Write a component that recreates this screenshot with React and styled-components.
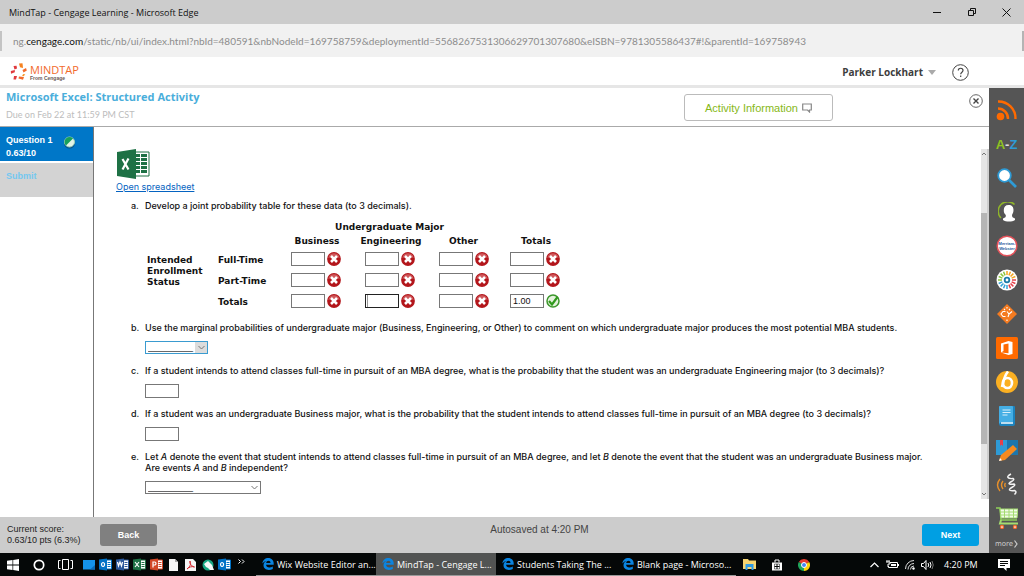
import styled, { createGlobalStyle } from "styled-components";

const GlobalStyle = createGlobalStyle`
  :root {
    --font-ui: "Open Sans", "Noto Sans", sans-serif;
    --font-address: Lato, "Open Sans", sans-serif;
    --font-arial: "Liberation Sans", Arial, sans-serif;
    --font-content: Inter, Verdana, sans-serif;
    --font-heading: "DejaVu Sans", Verdana, sans-serif;
    --gray-bar: #cccccc;
    --gray-rail: #555555;
    --blue-500: #009fe3;
    --blue-700: #0077c8;
  }

  * {
    box-sizing: border-box;
    margin: 0;
    padding: 0;
  }

  body {
    background: #fff;
    font-family: var(--font-ui);
  }

  button {
    border: none;
    background: none;
    font-family: inherit;
    cursor: pointer;
  }

  svg {
    display: block;
    flex-shrink: 0;
  }
`;

const Page = styled.div`
  display: flex;
  flex-direction: column;
  min-height: 100vh;
`;

/* Window chrome */

const TitleBar = styled.div`
  display: flex;
  justify-content: space-between;
  align-items: center;
  height: 24px;
  padding-left: 9px;
  background: var(--gray-bar);
  font-size: 9px;
  color: #111;
`;

const WindowButtons = styled.div`
  display: flex;
`;

const WindowButton = styled.button`
  display: flex;
  align-items: center;
  justify-content: center;
  width: 35px;
  height: 24px;
`;

const AddressBar = styled.div`
  display: flex;
  align-items: center;
  height: 33px;
  background: #f1f1f1;
`;

const Address = styled.p`
  flex: 1;
  height: 20px;
  padding-left: 11px;
  border-left: 2px solid #c4c4c4;
  border-right: 2px solid #b4b4b4;
  font-family: var(--font-address);
  font-size: 10px;
  line-height: 20px;
  color: #8c8c8c;
  white-space: nowrap;

  span {
    color: #111;
  }
`;

/* Site header */

const Header = styled.header`
  display: flex;
  justify-content: space-between;
  align-items: center;
  height: 31px;
  padding: 2px 55px 0 10px;
  border-bottom: 3px solid #e6e6e6;
  background: #fff;
`;

const Logo = styled.a`
  display: flex;
  align-items: center;
  gap: 3px;
  text-decoration: none;
`;

const LogoText = styled.span`
  display: flex;
  flex-direction: column;
  font-size: 11px;
  line-height: 11px;
  color: #f26a2b;

  small {
    font-family: var(--font-arial);
    font-size: 5px;
    font-weight: 700;
    line-height: 6px;
    color: #6b5a55;
  }
`;

const Account = styled.div`
  display: flex;
  align-items: center;
  gap: 16px;
`;

const UserButton = styled.button`
  display: flex;
  align-items: center;
  gap: 5px;
  font-size: 10px;
  font-weight: 700;
  color: #3d3d3d;
`;

/* Body */

const Body = styled.div`
  display: flex;
  flex: 1;
`;

const Main = styled.main`
  display: flex;
  flex: 1;
  flex-direction: column;
  min-width: 0;
`;

const ActivityHeader = styled.div`
  display: flex;
  justify-content: space-between;
  height: 39px;
  padding: 0 6px;
  border-bottom: 1px solid #aaa;
`;

const ActivityTitle = styled.div`
  h1 {
    font-size: 11px;
    line-height: 18px;
    color: #4aaedb;
  }

  p {
    font-family: var(--font-address);
    font-size: 9px;
    line-height: 17px;
    color: #bdbdbd;
  }
`;

const ActivityActions = styled.div`
  display: flex;
  align-items: flex-start;
  gap: 136px;
  padding-top: 6px;
`;

const InfoButton = styled.button`
  display: flex;
  align-items: center;
  justify-content: center;
  gap: 4px;
  width: 149px;
  height: 27px;
  border: 1px solid #bbb;
  border-radius: 3px;
  font-family: var(--font-arial);
  font-size: 11px;
  color: #86b817;
`;

const Workspace = styled.div`
  display: flex;
  flex: 1;
`;

const Sidebar = styled.nav`
  display: flex;
  flex-direction: column;
  gap: 2px;
  width: 94px;
  border-right: 1px solid #777;
`;

const NavItem = styled.a`
  display: flex;
  justify-content: space-between;
  height: 34px;
  padding: 7px 17px 0 6px;
  background: ${(props) => (props.$active ? "var(--blue-700)" : "#d3d3d3")};
  font-family: var(--font-arial);
  font-size: 9px;
  font-weight: 700;
  line-height: 13px;
  color: ${(props) => (props.$active ? "#fff" : "#74c8f0")};
  text-decoration: none;
`;

const Content = styled.section`
  flex: 1;
  padding: 22px 20px 22px 22px;
  font-family: var(--font-content);
  font-size: 9px;
  font-weight: 500;
  line-height: 11px;
  color: #111;
`;

const SpreadsheetLink = styled.a`
  display: inline-flex;
  flex-direction: column;
  gap: 2px;
  font-weight: 400;
  color: #0563c1;
`;

const Questions = styled.ol`
  display: flex;
  flex-direction: column;
  gap: 10px;
  padding: 8px 0 0 15px;
  list-style: none;
`;

const Question = styled.li`
  display: grid;
  grid-template-columns: 14px 1fr;
`;

const Answer = styled.div`
  display: flex;
  height: 14px;
  margin-top: 8px;
`;

const Field = styled.input`
  width: 34px;
  height: 14px;
  padding: 0 2px;
  border: 1px solid ${(props) => (props.$editing ? "#222" : "#777")};
  border-radius: 0;
  background: ${(props) =>
    props.$editing
      ? "linear-gradient(90deg, #fff 1px, #999 1px, #999 2px, #fff 2px)"
      : "#fff"};
  font-family: var(--font-arial);
  font-size: 9px;
  color: #111;
`;

const SelectBox = styled.div`
  position: relative;
  width: ${(props) => props.$width};
  height: 13px;

  select {
    width: 100%;
    height: 13px;
    padding: 0 2px;
    border: 1px solid ${(props) => (props.$focused ? "#3a9bd0" : "#777")};
    border-radius: 0;
    appearance: none;
    background: #fff;
    font-family: var(--font-arial);
    font-size: 9px;
    line-height: 11px;
    color: #111;
  }
`;

const SelectArrow = styled.span`
  position: absolute;
  top: 1px;
  right: 1px;
  display: flex;
  align-items: center;
  justify-content: center;
  width: 12px;
  height: 11px;
  background: ${(props) => (props.$focused ? "#dcdcdc" : "#fff")};
  pointer-events: none;
`;

const Table = styled.table`
  width: 415px;
  margin: 9px 0 1px 2px;
  border-collapse: collapse;
  table-layout: fixed;
  font-family: var(--font-heading);

  tr {
    height: 14px;
  }

  tbody tr {
    height: 21px;
  }

  th {
    font-weight: 700;
    text-align: left;
  }
`;

const Col = styled.col`
  width: ${(props) => props.$width};
`;

const ColumnHead = styled.th`
  && {
    padding-right: ${(props) => (props.$last ? "0" : "22px")};
    text-align: center;
    white-space: nowrap;
  }

  span {
    display: flex;
    justify-content: center;
  }
`;

const GroupHead = styled.th`
  padding-top: 7px;
  vertical-align: top;
`;

const RowHead = styled.th`
  padding-top: 3px;
`;

const GradedField = styled.div`
  display: flex;
  align-items: center;
  gap: 2px;
`;

const Scroller = styled.div`
  display: flex;
  flex-direction: column;
  align-items: center;
  width: 8px;
  margin: 22px 0 18px;
  padding: 3px 0;
  border-right: 2px solid #cfcfcf;
  background: #e5e5e5;
`;

const Thumb = styled.div`
  align-self: stretch;
  flex: 1;
  margin: 57px 0 48px;
  background: #b5b5b5;
`;

const Footer = styled.footer`
  display: flex;
  align-items: flex-start;
  height: 36px;
  padding: 7px 10px 0 7px;
  background: var(--gray-bar);
  font-family: var(--font-arial);
  font-size: 9px;
  line-height: 11px;
  color: #222;
`;

const Score = styled.p`
  width: 93px;
`;

const Autosave = styled.p`
  flex: 1;
  font-size: 10px;
  text-align: center;
  color: #444;
`;

const FooterButton = styled.button`
  width: 57px;
  height: 22px;
  border-radius: 3px;
  background: ${(props) => (props.$primary ? "var(--blue-500)" : "#808080")};
  font-family: var(--font-arial);
  font-size: 9px;
  font-weight: 700;
  color: #fff;
`;

/* App rail */

const Rail = styled.aside`
  display: flex;
  flex-direction: column;
  align-items: center;
  width: 35px;
  padding-top: 5px;
  background: var(--gray-rail);
`;

const RailButton = styled.button`
  display: flex;
  align-items: center;
  justify-content: center;
  width: 35px;
  height: 34px;
`;

const AzLabel = styled.span`
  font-family: var(--font-arial);
  font-size: 13px;
  font-weight: 700;
  color: ${(props) => props.$color};
`;

const MoreButton = styled.button`
  display: flex;
  align-items: center;
  gap: 1px;
  height: 18px;
  font-family: var(--font-heading);
  font-size: 7px;
  color: #ccc;
`;

/* Taskbar */

const Taskbar = styled.div`
  display: flex;
  height: 23px;
  background: #050808;
  color: #fff;
`;

const StartGroup = styled.div`
  display: flex;
  width: 78px;
`;

const PinnedGroup = styled.div`
  display: flex;
  width: 178px;
  padding-left: 2px;
`;

const TaskIcon = styled.button`
  display: flex;
  align-items: center;
  justify-content: center;
  width: ${(props) => props.$width || "17px"};
  height: 23px;
  color: #fff;
`;

const TaskTab = styled.button`
  display: flex;
  align-items: center;
  gap: 3px;
  width: 120px;
  padding-left: 6px;
  border-bottom: 1px solid #999;
  background: ${(props) => (props.$active ? "#525453" : "transparent")};
  font-size: 9px;
  color: #fff;
  white-space: nowrap;
`;

const AppGroup = styled.div`
  display: flex;
  flex: 1;
`;

const Tray = styled.div`
  display: flex;
  align-items: center;
`;

const Clock = styled.time`
  width: 48px;
  padding-left: 8px;
  font-size: 9px;
  white-space: nowrap;
`;

function LogoMark() {
  return (
    <svg width="17" height="18" viewBox="0 0 17 18">
      <g fill="#f58220">
        <path d="M9 .5l3.500-.3.500 4.800-3-.8z" />
        <path d="M12.500 7l3.500-2 .8 2.500-3.300 2z" fill="#f26a2b" />
        <path d="M13.500 11l1.800.6-1.800 1.600-1.500-.8z" fill="#f7941e" />
        <path d="M9 13.500l5 .5-1 2.800-4.500-1.300z" fill="#f26a2b" />
      </g>
      <g fill="#e03a3e">
        <path d="M3.500 3l3-.3L7 5.500l-2.500 1z" />
        <path d="M.8 8l4-1v2.200L1 10.800z" />
        <path d="M4 13h3l-1 3.500H3.500z" />
      </g>
    </svg>
  );
}

function ExcelIcon() {
  return (
    <svg width="34" height="30" viewBox="0 0 34 30">
      <path d="M18 3h15v24H18z" fill="#fff" stroke="#1e7145" />
      <g fill="#1e7145">
        <path d="M1 3L20 0v30L1 27z" />
        {[5, 9, 13, 17, 21].map((y) => (
          <path key={y} d={`M20 ${y}h4v3h-4zM25 ${y}h6v3h-6z`} />
        ))}
      </g>
      <path
        d="M6.500 10l6 10.500M12.500 9.500L6.500 20.500"
        stroke="#fff"
        strokeWidth="2.200"
      />
    </svg>
  );
}

function WrongIcon() {
  return (
    <svg width="14" height="14" viewBox="0 0 14 14">
      <circle cx="7" cy="7" r="6.900" fill="#b3161b" />
      <path d="M1.300 6a5.800 5.800 0 0 1 11.400 0q-5.700-2.500-11.400 0" fill="#d0595c" />
      <path d="M4 4l6 6M10 4l-6 6" stroke="#fff" strokeWidth="2.600" />
    </svg>
  );
}

function RightIcon() {
  return (
    <svg width="14" height="14" viewBox="0 0 14 14">
      <circle cx="7" cy="7" r="6" fill="#e4f2dc" stroke="#3c962c" strokeWidth="1.500" />
      <path d="M3 7l3 3.500L11.500 3" fill="none" stroke="#2f9a1c" strokeWidth="2.200" />
    </svg>
  );
}

function PartialIcon() {
  return (
    <svg width="13" height="15" viewBox="0 0 13 15">
      <circle cx="6.500" cy="9" r="5.600" fill="#04508b" />
      <circle cx="6.500" cy="8" r="5" fill="#e2f3e6" stroke="#9fd3bd" />
      <path d="M3 11.500A4.900 4.900 0 0 1 10 4.500z" fill="#17a05c" />
    </svg>
  );
}

function Chevron() {
  return (
    <svg width="7" height="5" viewBox="0 0 7 5">
      <path d="M.5 1l3 3 3-3" fill="none" stroke="#777" />
    </svg>
  );
}

function EdgeIcon() {
  return (
    <svg width="12" height="12" viewBox="0 0 12 12">
      <path
        d="M.3 5.500C.8 2 3.200 0 6.200 0c3.500 0 5.600 2.500 5.500 5.800v1H4.100c.1 1.800 1.400 2.600 3.200 2.600 1.300 0 2.500-.3 3.500-.9v2.500c-1.100.6-2.500 1-4 1C3.600 12 1.500 10 1.500 7.300c0-2 1-3.500 2.800-4.400C2.700 3.200 1.200 4.200.3 5.500zM4.200 4.900H8.500C8.500 3.500 7.700 2.700 6.500 2.700S4.400 3.600 4.200 4.900z"
        fill="#0a84e0"
      />
    </svg>
  );
}

const officeMarks = {
  o: "M4 4.500a1.500 2 0 1 0 .1 0z",
  w: "M1.500 4l1 4 1.500-4 1.500 4 1-4",
  x: "M2 4l4 5M6 4L2 9",
  p: "M3 9.500V4h1.500a1.500 1.500 0 0 1 0 3H3",
};

function OfficeIcon({ mark, color }) {
  return (
    <svg width="13" height="13" viewBox="0 0 13 13">
      <path d="M7 2h5.500v9H7z" fill="#fff" stroke={color} />
      <path d="M8.500 4.500h3M8.500 6.500h3M8.500 8.500h3" stroke={color} />
      <path d="M0 1.500L8 .5v12l-8-1z" fill={color} />
      <path d={officeMarks[mark]} fill="none" stroke="#fff" strokeWidth="1.200" />
    </svg>
  );
}

const railIcons = [
  {
    label: "RSS",
    icon: (
      <svg width="22" height="22" viewBox="0 0 22 22">
        <circle cx="4.500" cy="17.500" r="3.800" fill="#ff6a00" />
        <path
          d="M2 9.500a10 10 0 0 1 10 10.500M2 2.500a17 17 0 0 1 17.500 17.500"
          fill="none"
          stroke="#ff6a00"
          strokeWidth="2.400"
        />
      </svg>
    ),
  },
  {
    label: "Dictionary",
    icon: (
      <>
        <AzLabel $color="#8fc31f">A</AzLabel>
        <AzLabel $color="#ddd">-</AzLabel>
        <AzLabel $color="#2e9bd6">Z</AzLabel>
      </>
    ),
  },
  {
    label: "Search",
    icon: (
      <svg width="20" height="20" viewBox="0 0 20 20">
        <path d="M11 11l8 8" stroke="#2e9bd6" strokeWidth="2.600" />
        <circle cx="7.500" cy="7.500" r="6.300" fill="#fff" stroke="#2e9bd6" strokeWidth="1.800" />
      </svg>
    ),
  },
  {
    label: "Profile",
    icon: (
      <svg width="18" height="20" viewBox="0 0 18 20">
        <path d="M3 16A9 9 0 0 1 16.500 2.500" fill="none" stroke="#8fb52a" strokeWidth="1.500" />
        <path
          d="M10.500 3c3.500 0 5 2 5 5s-1 3.500-1.500 5c0 2 .5 2.500 3 3.500v1.500c-3 2-9 2-12 0v-1.500c2.500-1 3-1.500 2.800-3.500C6 11.500 5.800 10 5.800 8c0-3 1.500-5 4.700-5z"
          fill="#fff"
        />
      </svg>
    ),
  },
  {
    label: "Merriam-Webster",
    icon: (
      <svg width="22" height="22" viewBox="0 0 22 22">
        <circle cx="11" cy="11" r="9.800" fill="#fff" stroke="#e4525a" strokeWidth="1.500" />
        <g
          fill="#27609e"
          fontFamily="Liberation Sans"
          fontWeight="700"
          fontSize="4"
          textAnchor="middle"
        >
          <text x="11" y="10">Merriam-</text>
          <text x="11" y="15">Webster</text>
        </g>
      </svg>
    ),
  },
  {
    label: "Insights",
    icon: (
      <svg width="22" height="22" viewBox="0 0 22 22">
        <circle cx="11" cy="11" r="10.500" fill="#fff" />
        {Array.from({ length: 16 }, (_, i) => (
          <path
            key={i}
            d="M11 2v4"
            stroke={["#f5a623", "#e5404a", "#35a3d8", "#8cc63f"][i >> 2]}
            strokeWidth="1.500"
            transform={`rotate(${i * 22.5} 11 11)`}
          />
        ))}
        <circle cx="11" cy="11" r="2.300" fill="#fff" stroke="#1b7ba8" strokeWidth="1.800" />
      </svg>
    ),
  },
  {
    label: "CourseYard",
    icon: (
      <svg width="20" height="20" viewBox="0 0 20 20">
        <path d="M10 0l10 10-10 10L0 10z" fill="#f47b20" />
        <path
          d="M8.500 7.500H6L4 10l2 2.500h2.500M10 7.500l2 2.500M15 7.500l-3 2.500-1 3M10 3v1.500M10 15.500V17M7 5l1 1M13 5l-1 1"
          fill="none"
          stroke="#fff"
          strokeWidth="1.100"
        />
      </svg>
    ),
  },
  {
    label: "Office",
    icon: (
      <svg width="22" height="22" viewBox="0 0 22 22">
        <rect width="22" height="22" rx="1.500" fill="#ff6a00" />
        <path d="M5 6.500L12.500 4l4 1v12l-4 1L5 15.500l7.500.8V6.500L7.500 7.600v6.500L5 15.500z" fill="#fff" />
      </svg>
    ),
  },
  {
    label: "Bongo",
    icon: (
      <svg width="22" height="22" viewBox="0 0 22 22">
        <circle cx="11" cy="11" r="11" fill="#fbb022" />
        <path d="M12 .5C9 4 7.500 9 6 16" fill="none" stroke="#fff" strokeWidth="2.600" />
        <ellipse cx="11.500" cy="12" rx="4.500" ry="5" fill="none" stroke="#fff" strokeWidth="2.600" />
      </svg>
    ),
  },
  {
    label: "eBook",
    icon: (
      <svg width="18" height="20" viewBox="0 0 18 20">
        <path d="M2 0h14q1 0 1 1v17q0 2-2 2H3q-2 0-2-2V1q0-1 1-1z" fill="#1d83bd" />
        <path d="M2 0h12q1 0 1 1v15H3l-2 2V1q0-1 1-1z" fill="#45aee4" />
        <path d="M3 17h12" stroke="#e8f4fa" strokeWidth="1.600" />
        <path d="M4.500 4h8M4.500 6.500h8M4.500 9h5" stroke="#d9effa" />
      </svg>
    ),
  },
  {
    label: "Notes",
    icon: (
      <svg width="22" height="22" viewBox="0 0 22 22">
        <path d="M0 1h11v16l-5-1H0z" fill="#2e9bd6" />
        <path d="M11 1h11v15H11z" fill="#1b76ad" />
        <path d="M4 1h3v6L5.500 5.500 4 7z" fill="#e5404a" />
        <path d="M17 6l4 4L9 21l-6 1 2-6z" fill="#f58a1f" />
        <path d="M3 22l1-3 2 2.300z" fill="#fff" />
      </svg>
    ),
  },
  {
    label: "ReadSpeaker",
    icon: (
      <svg width="22" height="22" viewBox="0 0 22 22">
        <path
          d="M4 6q-5 6 0 12M7 8q-3 4 0 8M9.500 10q-1.500 2 0 4"
          fill="none"
          stroke="#e8902a"
          strokeWidth="1.400"
        />
        <path
          d="M15 1q-4 2-3 3.500t5 1q2 1-1.500 3t-2 2.500 4.500 0q2 1-1.500 3t-3 3 5 .5q3 1 0 4"
          fill="none"
          stroke="#f2f2f2"
          strokeWidth="1.500"
        />
      </svg>
    ),
  },
  {
    label: "Store",
    icon: (
      <svg width="22" height="22" viewBox="0 0 22 22">
        <path d="M0 1h4l1 12h16" fill="none" stroke="#8fd05a" strokeWidth="1.500" />
        <path d="M4 2h18l-1 9H5z" fill="#f3fbe9" stroke="#a4dc70" />
        <path d="M8.500 2v9M13 2v9M17.500 2v9M4 5h18M5 8h16" stroke="#a4dc70" />
        <path d="M5 13l-1 3.500h18" fill="none" stroke="#a4dc70" strokeWidth="2" />
        <circle cx="6" cy="20" r="1.500" fill="#fff" stroke="#f26a2b" strokeWidth="1.300" />
        <circle cx="19" cy="20" r="1.500" fill="#fff" stroke="#f26a2b" strokeWidth="1.300" />
      </svg>
    ),
  },
];

const pinned = [
  {
    label: "Desktop",
    icon: (
      <svg width="12" height="10" viewBox="0 0 12 10">
        <path d="M0 0h12v9.500H0z" fill="#1593ea" />
        <path d="M12 5v4.500H7z" fill="#0a6bb8" />
      </svg>
    ),
  },
  { label: "Outlook", icon: <OfficeIcon mark="o" color="#0072c6" /> },
  { label: "Word", icon: <OfficeIcon mark="w" color="#2b579a" /> },
  { label: "Excel", icon: <OfficeIcon mark="x" color="#1e7145" /> },
  { label: "PowerPoint", icon: <OfficeIcon mark="p" color="#d24726" /> },
  {
    label: "Document",
    icon: (
      <svg width="9" height="12" viewBox="0 0 9 12">
        <path d="M0 0h6l3 3v9H0z" fill="#f6f6f6" />
        <path d="M6 0v3h3z" fill="#aaa" />
      </svg>
    ),
  },
  {
    label: "Acrobat",
    icon: (
      <svg width="11" height="12" viewBox="0 0 11 12">
        <path d="M0 0h8l3 3v9H0z" fill="#f6f6f6" />
        <path d="M2 10C6 7 6 4 5 2c-1 2 1 5 4.500 6C7 7 4 8 2 10z" fill="none" stroke="#d2232a" />
      </svg>
    ),
  },
  {
    label: "Paint",
    icon: (
      <svg width="12" height="12" viewBox="0 0 12 12">
        <circle cx="6" cy="6" r="5.500" fill="#19a884" />
        <path d="M2 5l4-3 4 4 2 5H8L6 9 4 8z" fill="#f4f9f7" />
      </svg>
    ),
  },
  { label: "Outlook mail", icon: <OfficeIcon mark="o" color="#0072c6" /> },
];

const tabs = [
  "Wix Website Editor an...",
  "MindTap - Cengage L...",
  "Students Taking The ...",
  "Blank page - Microso...",
];

const columns = ["Business", "Engineering", "Other", "Totals"];
const columnWidths = ["71px", "73px", "74px", "74px", "71px", "52px"];

const rows = [
  { label: "Full-Time", values: ["", "", "", ""] },
  { label: "Part-Time", values: ["", "", "", ""] },
  { label: "Totals", values: ["", "", "", "1.00"] },
];

function ProbabilityTable() {
  return (
    <Table>
      <colgroup>
        {columnWidths.map((width, i) => (
          <Col key={i} $width={width} />
        ))}
      </colgroup>
      <thead>
        <tr>
          <td colSpan={2} />
          <ColumnHead colSpan={3}>Undergraduate Major</ColumnHead>
          <td />
        </tr>
        <tr>
          <td colSpan={2} />
          {columns.map((column, i) => (
            <ColumnHead key={column} $last={i === 3}>
              <span>{column}</span>
            </ColumnHead>
          ))}
        </tr>
      </thead>
      <tbody>
        {rows.map((row, r) => (
          <tr key={row.label}>
            {r === 0 && (
              <GroupHead rowSpan={3}>
                Intended
                <br />
                Enrollment
                <br />
                Status
              </GroupHead>
            )}
            <RowHead>{row.label}</RowHead>
            {row.values.map((value, c) => (
              <td key={c}>
                <GradedField>
                  <Field
                    aria-label={`${row.label}, ${columns[c]}`}
                    defaultValue={value}
                    $editing={r === 2 && c === 1}
                  />
                  {value ? <RightIcon /> : <WrongIcon />}
                </GradedField>
              </td>
            ))}
          </tr>
        ))}
      </tbody>
    </Table>
  );
}

function Dropdown({ id, width, focused }) {
  return (
    <SelectBox $width={width} $focused={focused}>
      <select id={id}>
        <option>_________</option>
      </select>
      <SelectArrow $focused={focused}>
        <Chevron />
      </SelectArrow>
    </SelectBox>
  );
}

function App() {
  return (
    <>
      <GlobalStyle />
      <Page>
        <TitleBar>
          <span>MindTap - Cengage Learning - Microsoft Edge</span>
          <WindowButtons>
            <WindowButton aria-label="Minimize">
              <svg width="8" height="9" viewBox="0 0 8 9">
                <path d="M0 4.500h8" stroke="#111" />
              </svg>
            </WindowButton>
            <WindowButton aria-label="Restore">
              <svg width="8" height="8" viewBox="0 0 8 8">
                <path d="M.5 2.500h5v5h-5zM2.500 2V.5h5v5H6" fill="none" stroke="#111" />
              </svg>
            </WindowButton>
            <WindowButton aria-label="Close">
              <svg width="9" height="9" viewBox="0 0 9 9">
                <path d="M.5.5l8 8M8.500.5l-8 8" stroke="#111" />
              </svg>
            </WindowButton>
          </WindowButtons>
        </TitleBar>

        <AddressBar>
          <Address>
            ng.<span>cengage.com</span>
            /static/nb/ui/index.html?nbId=480591&amp;nbNodeId=169758759&amp;deploymentId=5568267531306629701307680&amp;eISBN=9781305586437#!&amp;parentId=169758943
          </Address>
        </AddressBar>

        <Header>
          <Logo href="#home">
            <LogoMark />
            <LogoText>
              MINDTAP
              <small>From Cengage</small>
            </LogoText>
          </Logo>
          <Account>
            <UserButton>
              Parker Lockhart
              <svg width="8" height="5" viewBox="0 0 8 5">
                <path d="M0 0h8L4 5z" fill="#aaa" />
              </svg>
            </UserButton>
            <button aria-label="Help">
              <svg width="17" height="17" viewBox="0 0 17 17">
                <circle cx="8.500" cy="8.500" r="7.800" fill="none" stroke="#444" />
                <path
                  d="M6.300 6.500c0-3 4.700-3 4.700 0 0 1.700-2.300 1.700-2.300 3.800M8.700 11.500v1.500"
                  fill="none"
                  stroke="#444"
                  strokeWidth="1.200"
                />
              </svg>
            </button>
          </Account>
        </Header>

        <Body>
          <Main>
            <ActivityHeader>
              <ActivityTitle>
                <h1>Microsoft Excel: Structured Activity</h1>
                <p>Due on Feb 22 at 11:59 PM CST</p>
              </ActivityTitle>
              <ActivityActions>
                <InfoButton>
                  Activity Information
                  <svg width="10" height="10" viewBox="0 0 10 10">
                    <path
                      d="M.7 1h8.600v6H7.500v2L5.500 7H.7z"
                      fill="none"
                      stroke="#888"
                      strokeWidth="1.200"
                    />
                  </svg>
                </InfoButton>
                <button aria-label="Close activity">
                  <svg width="14" height="14" viewBox="0 0 14 14">
                    <circle cx="7" cy="7" r="6.300" fill="#fff" stroke="#666" />
                    <path d="M4.500 4.500l5 5M9.500 4.500l-5 5" stroke="#444" strokeWidth="1.400" />
                  </svg>
                </button>
              </ActivityActions>
            </ActivityHeader>

            <Workspace>
              <Sidebar>
                <NavItem href="#question-1" $active>
                  <span>
                    Question 1
                    <br />
                    0.63/10
                  </span>
                  <PartialIcon />
                </NavItem>
                <NavItem href="#submit">Submit</NavItem>
              </Sidebar>

              <Content>
                <SpreadsheetLink href="#spreadsheet">
                  <ExcelIcon />
                  Open spreadsheet
                </SpreadsheetLink>

                <Questions>
                  <Question>
                    <span>a.</span>
                    <div>
                      <p>Develop a joint probability table for these data (to 3 decimals).</p>
                      <ProbabilityTable />
                    </div>
                  </Question>
                  <Question>
                    <span>b.</span>
                    <div>
                      <label htmlFor="answer-b">
                        Use the marginal probabilities of undergraduate major
                        (Business, Engineering, or Other) to comment on which
                        undergraduate major produces the most potential MBA
                        students.
                      </label>
                      <Answer>
                        <Dropdown id="answer-b" width="63px" focused />
                      </Answer>
                    </div>
                  </Question>
                  <Question>
                    <span>c.</span>
                    <div>
                      <label htmlFor="answer-c">
                        If a student intends to attend classes full-time in
                        pursuit of an MBA degree, what is the probability that
                        the student was an undergraduate Engineering major (to 3
                        decimals)?
                      </label>
                      <Answer>
                        <Field id="answer-c" />
                      </Answer>
                    </div>
                  </Question>
                  <Question>
                    <span>d.</span>
                    <div>
                      <label htmlFor="answer-d">
                        If a student was an undergraduate Business major, what
                        is the probability that the student intends to attend
                        classes full-time in pursuit of an MBA degree (to 3
                        decimals)?
                      </label>
                      <Answer>
                        <Field id="answer-d" />
                      </Answer>
                    </div>
                  </Question>
                  <Question>
                    <span>e.</span>
                    <div>
                      <label htmlFor="answer-e">
                        Let <i>A</i> denote the event that student intends to
                        attend classes full-time in pursuit of an MBA degree,
                        and let <i>B</i> denote the event that the student was
                        an undergraduate Business major.
                        <br />
                        Are events <i>A</i> and <i>B</i> independent?
                      </label>
                      <Answer>
                        <Dropdown id="answer-e" width="116px" />
                      </Answer>
                    </div>
                  </Question>
                </Questions>
              </Content>

              <Scroller>
                <svg width="6" height="4" viewBox="0 0 6 4">
                  <path d="M1 3l2-2 2 2" fill="none" stroke="#777" />
                </svg>
                <Thumb />
                <svg width="6" height="4" viewBox="0 0 6 4">
                  <path d="M1 1l2 2 2-2" fill="none" stroke="#777" />
                </svg>
              </Scroller>
            </Workspace>

            <Footer>
              <Score>
                Current score:
                <br />
                0.63/10 pts (6.3%)
              </Score>
              <FooterButton>Back</FooterButton>
              <Autosave>Autosaved at 4:20 PM</Autosave>
              <FooterButton $primary>Next</FooterButton>
            </Footer>
          </Main>

          <Rail>
            {railIcons.map((item) => (
              <RailButton key={item.label} aria-label={item.label}>
                {item.icon}
              </RailButton>
            ))}
            <MoreButton>
              more
              <svg width="4" height="8" viewBox="0 0 4 8">
                <path d="M.5.5L3 4 .5 7.500" fill="none" stroke="#ccc" strokeWidth="1.200" />
              </svg>
            </MoreButton>
          </Rail>
        </Body>

        <Taskbar>
          <StartGroup>
            <TaskIcon $width="27px" aria-label="Start">
              <svg width="12" height="12" viewBox="0 0 12 12">
                <path
                  d="M0 1.700L5.500 1v4.600H0zM6.200.9L12 0v5.600H6.200zM0 6.400h5.500V11L0 10.300zM6.200 6.400H12V12l-5.800-.9z"
                  fill="#fff"
                />
              </svg>
            </TaskIcon>
            <TaskIcon $width="27px" aria-label="Cortana">
              <svg width="12" height="12" viewBox="0 0 12 12">
                <circle cx="6" cy="6" r="4.700" fill="none" stroke="#fff" strokeWidth="1.700" />
              </svg>
            </TaskIcon>
            <TaskIcon $width="27px" aria-label="Task view">
              <svg width="15" height="11" viewBox="0 0 15 11">
                <path
                  d="M4.500.5h6v10h-6zM2.500 1.500h-2v8h2M12.500 1.500h2v8h-2"
                  fill="none"
                  stroke="#fff"
                />
              </svg>
            </TaskIcon>
          </StartGroup>

          <PinnedGroup>
            {pinned.map((item) => (
              <TaskIcon key={item.label} aria-label={item.label}>
                {item.icon}
              </TaskIcon>
            ))}
            <TaskIcon aria-label="More apps">
              <svg width="7" height="12" viewBox="0 0 7 12">
                <path d="M.5.5l2 2-2 2M4 .5l2 2-2 2" fill="none" stroke="#fff" />
              </svg>
            </TaskIcon>
          </PinnedGroup>

          {tabs.map((tab, i) => (
            <TaskTab key={tab} $active={i === 1}>
              <EdgeIcon />
              {tab}
            </TaskTab>
          ))}

          <AppGroup>
            <TaskIcon $width="27px" aria-label="File Explorer">
              <svg width="13" height="11" viewBox="0 0 13 11">
                <path d="M0 0h5l1 1.500h7V10H0z" fill="#f6d571" />
                <path d="M2.500 11V5h8v6H8.500V8h-4v3z" fill="#2e9be6" />
              </svg>
            </TaskIcon>
            <TaskIcon $width="27px" aria-label="Store">
              <svg width="12" height="12" viewBox="0 0 12 12">
                <path d="M1 3.500h10v8H1z" fill="#fff" />
                <path d="M4 3.500V1h4v2.500" fill="none" stroke="#fff" />
                <path d="M3.500 7.500h5M6 5v5" stroke="#050808" />
                <path d="M3.500 5h5v5h-5z" fill="none" stroke="#050808" strokeWidth=".5" />
              </svg>
            </TaskIcon>
            <TaskIcon $width="27px" aria-label="Chrome">
              <svg width="12" height="12" viewBox="0 0 12 12">
                <path d="M6 6L.8 3A6 6 0 0 1 11.200 3z" fill="#e33b2e" />
                <path d="M6 6L.8 3A6 6 0 0 0 6 12z" fill="#1fa35a" />
                <path d="M6 6l5.200-3A6 6 0 0 1 6 12z" fill="#fcd20a" />
                <circle cx="6" cy="6" r="2.500" fill="#4285f4" stroke="#fff" />
              </svg>
            </TaskIcon>
          </AppGroup>

          <Tray>
            <TaskIcon $width="18px" aria-label="Hidden icons">
              <svg width="9" height="6" viewBox="0 0 9 6">
                <path d="M.5 5l4-4 4 4" fill="none" stroke="#fff" strokeWidth="1.200" />
              </svg>
            </TaskIcon>
            <TaskIcon $width="18px" aria-label="Battery">
              <svg width="13" height="9" viewBox="0 0 13 9">
                <path d="M4 2.500h7.500v5H2.500V6M12.500 4v2M1 0v2M3 0v2M0 2h4v2H2v3" fill="none" stroke="#fff" />
                <path d="M5 4h5v2H5z" fill="#fff" />
              </svg>
            </TaskIcon>
            <TaskIcon $width="18px" aria-label="Network">
              <svg width="10" height="10" viewBox="0 0 10 10">
                <path
                  d="M.5 9A8.500 8.500 0 0 1 9 .5M3 9.500A6 6 0 0 1 9 3.500M5.500 9.500A3.500 3.500 0 0 1 9 6"
                  fill="none"
                  stroke="#ddd"
                />
                <circle cx="8.500" cy="8.500" r="1.200" fill="#fff" />
              </svg>
            </TaskIcon>
            <TaskIcon aria-label="Volume">
              <svg width="13" height="10" viewBox="0 0 13 10">
                <path
                  d="M.5 3.500h2l2.500-3v9l-2.500-3h-2zM7 3q1.500 2 0 4M9 2q2 3 0 6"
                  fill="none"
                  stroke="#fff"
                />
                <path d="M11 1q2.500 4 0 8" fill="none" stroke="#777" />
              </svg>
            </TaskIcon>
            <Clock>4:20 PM</Clock>
            <TaskIcon $width="40px" aria-label="Notifications">
              <svg width="12" height="12" viewBox="0 0 12 12">
                <path d="M0 0h12v9H8.500v3l-3-3H0z" fill="#fff" />
                <path d="M2 2.500h8M2 4.500h8M2 6.500h5" stroke="#050808" />
              </svg>
            </TaskIcon>
          </Tray>
        </Taskbar>
      </Page>
    </>
  );
}

export default App;
